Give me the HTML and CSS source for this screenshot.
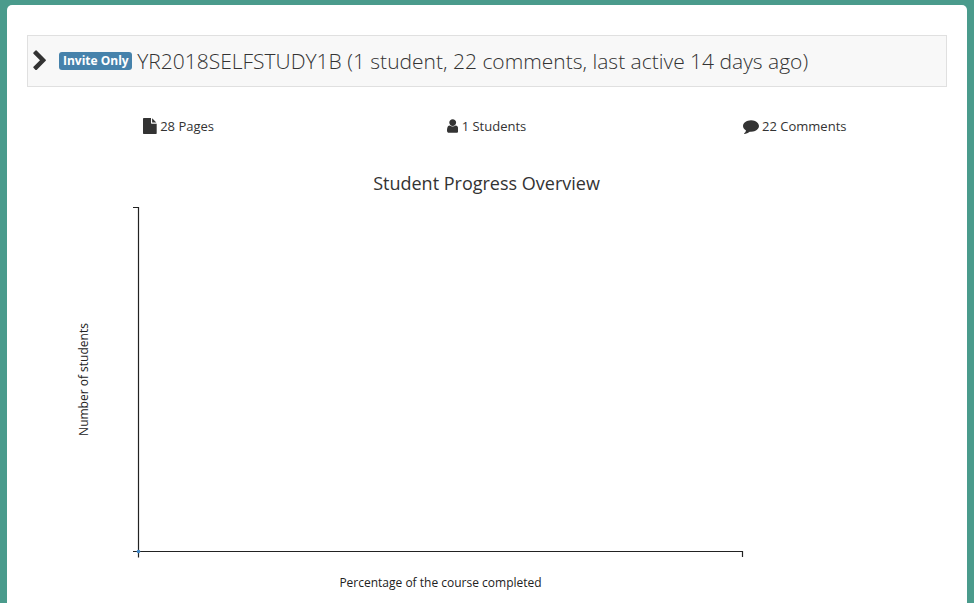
FILE: index.html
```html
<!DOCTYPE html>
<html lang="en">
<head>
<meta charset="utf-8">
<title>Student Progress Overview</title>
<link rel="stylesheet" href="styles.css">
</head>
<body>
<main class="panel">
  <header class="well">
    <svg class="chevron" viewBox="0 0 1792 1792" aria-hidden="true"><path d="M1363 877l-742 742q-19 19-45 19t-45-19l-166-166q-19-19-19-45t19-45l531-531-531-531q-19-19-19-45t19-45l166-166q19-19 45-19t45 19l742 742q19 19 19 45t-19 45z"/></svg>
    <span class="badge">Invite Only</span>
    <h1 class="title">YR2018SELFSTUDY1B (1 student, 22 comments, last active 14 days ago)</h1>
  </header>
  <section class="stats">
    <div class="stat">
      <svg class="icon icon-file" viewBox="128 0 1536 1792" aria-hidden="true"><path d="M1152 512v-472q22 14 36 28l408 408q14 14 28 36h-472zm-128 32q0 40 28 68t68 28h544v1056q0 40-28 68t-68 28h-1344q-40 0-68-28t-28-68v-1600q0-40 28-68t68-28h800v544z"/></svg>
      <span>28 Pages</span>
    </div>
    <div class="stat">
      <svg class="icon icon-user" viewBox="256 0 1280 1792" aria-hidden="true"><path d="M1536 1399q0 109-62.5 187t-150.5 78h-854q-88 0-150.5-78t-62.5-187q0-85 8.5-160.5t31.5-152 58.5-131 94-89 134.5-34.5q131 128 313 128t313-128q76 0 134.5 34.5t94 89 58.5 131 31.5 152 8.5 160.5zm-256-887q0 159-112.5 271.5t-271.5 112.5-271.5-112.5-112.5-271.5 112.5-271.5 271.5-112.5 271.5 112.5 112.5 271.5z"/></svg>
      <span>1 Students</span>
    </div>
    <div class="stat">
      <svg class="icon icon-comment" viewBox="0 0 1792 1792" aria-hidden="true"><path d="M1792 896q0 174-120 321.5t-326 233-450 85.5q-70 0-145-8-198 175-460 242-49 14-114 22-17 2-30.5-9t-17.5-29v-1q-3-4-.5-12t2-10 4.5-9.5l6-9 7-8.5 8-9q7-8 31-34.5t34.5-38 31-39.5 32.5-51 27-59 26-76q-157-89-247.5-220t-90.5-281q0-130 71-248.5t191-204.5 286-136.5 348-50.5q244 0 450 85.5t326 233 120 321.5z"/></svg>
      <span>22 Comments</span>
    </div>
  </section>
  <h2 class="chart-title">Student Progress Overview</h2>
  <svg class="chart" width="920" height="400" viewBox="27 200 920 400">
    <path class="axis" d="M133 207.5H138.5V557.5"/>
    <path class="axis" d="M133 551.5H742.5V557"/>
    <circle class="point" cx="138.5" cy="551.5" r="1.8"/>
    <text class="axis-label" x="440.5" y="587" text-anchor="middle">Percentage of the course completed</text>
    <text class="axis-label" x="0" y="0" text-anchor="middle" transform="translate(88 379.5) rotate(-90)">Number of students</text>
  </svg>
</main>
</body>
</html>
```

FILE: styles.css
```css
* {
  box-sizing: border-box;
}

html,
body {
  height: 603px;
  margin: 0;
  overflow: hidden;
}

body {
  background: #4a9b8c;
  padding: 5px 7px 0;
  font-family: "Open Sans", sans-serif;
  color: #333;
}

.panel {
  background: #fff;
  border-radius: 5px 5px 0 0;
  padding: 30px 20px 0;
  height: 598px;
}

.well {
  display: flex;
  align-items: center;
  height: 52px;
  background: #f8f8f8;
  border: 1px solid #e0e0e0;
  padding-left: 1px;
}

.chevron {
  width: 22px;
  height: 22px;
  fill: #333;
  flex: none;
}

.badge {
  flex: none;
  margin-left: 8px;
  height: 18px;
  line-height: 18px;
  padding: 0 3px 0 4px;
  background: #4682ab;
  border-radius: 3px;
  color: #fff;
  font-size: 12px;
  font-weight: 700;
}

.title {
  margin: 0 0 0 5.5px;
  font-size: 21px;
  font-weight: 300;
  white-space: nowrap;
  line-height: 30px;
}

.stats {
  display: grid;
  grid-template-columns: repeat(3, 308px);
  margin: 29px -2.5px 0;
}

.stat {
  display: flex;
  justify-content: center;
  align-items: center;
  gap: 3.5px;
  height: 20px;
  font-size: 13px;
}

.icon {
  height: 16px;
  fill: #333;
  flex: none;
}

.icon-file {
  width: 13.7px;
}

.icon-user {
  width: 11.4px;
}

.icon-comment {
  width: 16px;
}

.chart-title {
  margin: 35px 1px 0 0;
  font-size: 18px;
  font-weight: 400;
  line-height: 24px;
  text-align: center;
}

.chart {
  display: block;
  margin-top: 5px;
}

.axis {
  fill: none;
  stroke: #222;
  stroke-width: 1.2;
}

.point {
  fill: #3d85c6;
}

.axis-label {
  font-family: "Open Sans", sans-serif;
  font-size: 12px;
  fill: #222;
}
```
